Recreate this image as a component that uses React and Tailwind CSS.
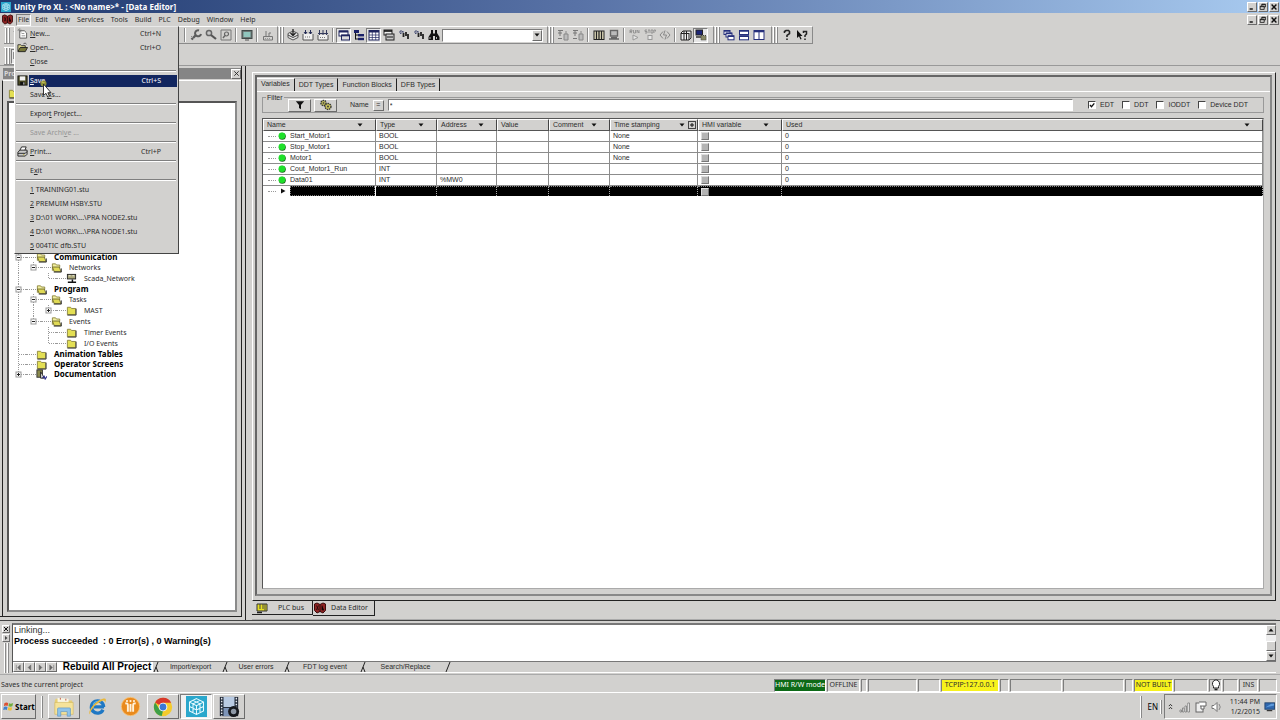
import { useState } from 'react';
import clsx from 'clsx';

const RAISED = 'border border-t-white border-l-white border-r-[#6b6b6b] border-b-[#6b6b6b]';
const SUNKEN = 'border border-t-[#7c7c7c] border-l-[#7c7c7c] border-r-white border-b-white';

const ICONS = {
  wrench: <><path d="M1.500 10.500 L6 6" stroke="#5c5c5c" strokeWidth="2.400" /><path d="M9 1.500 A3 3 0 1 0 11 5" fill="none" stroke="#5c5c5c" strokeWidth="2" /><path d="M1 7 L4 10" stroke="#888" /></>,
  lens: <><circle cx="4" cy="4" r="2.6" fill="#c8c8c8" stroke="#666" strokeWidth="1.5" /><path d="M6 6 L11 10" stroke="#555" strokeWidth="2.2" /></>,
  zoomFit: <><path d="M1 11 V1 H11 V11 Z" fill="none" stroke="#777" /><circle cx="6.5" cy="5" r="2" fill="none" stroke="#666" strokeWidth="1.2" /><path d="M5 6.5 L3 9" stroke="#666" strokeWidth="1.4" /></>,
  screen: <><rect x="1" y="1.5" width="10" height="8" fill="#6d7775" stroke="#3f4a48" /><rect x="2.5" y="3" width="7" height="5" fill="#8fc6bd" /><path d="M4 11 H8" stroke="#555" /></>,
  station: <><path d="M1.5 7.5 H10.5 V11 H1.5 Z M4 7 V2 M7 7 V4 H9" fill="none" stroke="#777" /><path d="M3 9.5 H9" stroke="#999" strokeDasharray="1 1" /></>,
  analyze: <><path d="M1 4.500 L6 2 L11 4.500 V8.500 L6 11 L1 8.500 Z" fill="#e8e8e8" stroke="#555" /><path d="M1 6 L6 8.500 L11 6" fill="none" stroke="#444" /><path d="M6 0 V6 M3.5 4 L6 6.500 L8.5 4" fill="none" stroke="#222" strokeWidth="1.3" /></>,
  build: <><path d="M1 5 V11 H11 V5" fill="#f0f0f0" stroke="#555" /><path d="M3.5 1 V5 M8.5 1 V5 M2 3 L3.5 5 L5 3 M7 3 L8.5 5 L10 3" fill="none" stroke="#222a55" /><path d="M3 8 H9" stroke="#777" strokeDasharray="1 1" /></>,
  buildAll: <><path d="M1 6 V11 H11 V6" fill="#f0f0f0" stroke="#555" /><path d="M2.5 1 V6 M6 1 V6 M9.5 1 V6 M1 4.5 H11" stroke="#333a5c" /><path d="M3 8.5 H9" stroke="#777" strokeDasharray="1 1" /></>,
  windows: <><rect x="1" y="2" width="9" height="5" fill="#fff" stroke="#20265f" /><path d="M1 2.5 H10" stroke="#20265f" strokeWidth="2" /><rect x="3.5" y="6" width="8" height="5" fill="#ddd" stroke="#20265f" /><path d="M3.5 6.5 H11.5" stroke="#20265f" strokeWidth="1.6" /></>,
  tree: <><path d="M2.5 1 V10.5 M2.5 6 H5 M2.5 10 H5" stroke="#111" /><rect x="1" y="1" width="5" height="3" fill="#1a2168" /><rect x="5" y="5" width="6" height="2.4" fill="#1a2168" /><rect x="5" y="8.8" width="6" height="2.4" fill="#1a2168" /></>,
  grid: <><rect x="1" y="1.5" width="10" height="9.5" fill="#fff" stroke="#20265f" /><path d="M1 2.5 H11" stroke="#20265f" strokeWidth="2" /><path d="M1 6 H11 M1 8.5 H11 M4.3 3 V11 M7.7 3 V11" stroke="#20265f" strokeWidth=".7" /></>,
  print: <><rect x="1" y="1" width="8" height="5" fill="#eee" stroke="#222" /><path d="M1 2 H9" stroke="#111" strokeWidth="1.6" /><rect x="3" y="5" width="8" height="6" fill="#c8c8c8" stroke="#222" /><path d="M4 8 H10" stroke="#333" strokeWidth="1.2" /></>,
  findNext: <><path d="M1 3 H6 M3 1 V5 M2 5 L5 2" stroke="#444c74" strokeDasharray="2 1" /><path d="M5.500 4 V8 M8 3 V7 M10 5 V10" stroke="#222" strokeWidth="1.8" /></>,
  binoculars: <><path d="M3 1 H5 V4 L6 5 L7 4 V1 H9 V4 L11.5 8 V11 H7 V7 H5 V11 H.5 V8 L3 4 Z" fill="#111" /><path d="M2 8 V10 M8.5 8 V10" stroke="#ddd" strokeWidth=".8" /></>,
  transfer: <><path d="M1 1.5 H6 M1 4 H5 M3 1 V7 M1 9.5 H5" stroke="#777" /><path d="M7 5 H11 V11 H7 Z M9 5 V2" fill="#bbb" stroke="#888" /></>,
  bars: <><rect x="1" y="2" width="10" height="8.5" fill="#e5e0c0" stroke="#222" /><path d="M3.5 2 V10 M6 2 V10 M8.5 2 V10" stroke="#222" strokeWidth="1.3" /></>,
  pc: <><rect x="2.5" y="1.5" width="7" height="5.5" fill="#bbb" stroke="#666" strokeWidth="1.4" /><path d="M1 10 H11 M3 8.5 H9" stroke="#666" strokeWidth="1.4" /></>,
  run: <><path d="M1 4 V1 H3 V2.5 H1 L3 4 M4.5 1 V4 H6.5 V1 M8 4 V1 L10 4 V1" fill="none" stroke="#888" strokeWidth=".8" /><path d="M4 6 L9 8.5 L4 11 Z" fill="#e6e6e6" stroke="#999" /></>,
  stop: <><path d="M3 1 H1 V2.5 H3 V4 H1 M4 1 H6 M5 1 V4 M7 1 H9 V4 H7 Z M10 4 V1 H11.5 V2.5" fill="none" stroke="#888" strokeWidth=".8" /><rect x="4" y="6.5" width="4" height="4" fill="#e6e6e6" stroke="#999" /></>,
  loop: <path d="M4 2.5 L1 6 L4 9.5 M8 2.5 L11 6 L8 9.5 M6 1.5 L4.5 6 H7.5 L6 10.5" fill="none" stroke="#888" />,
  racks: <><path d="M1 4 L3 2 H11 V9 L9 11 H1 Z" fill="#eee" stroke="#222" /><path d="M1 4.5 H9 M4 2 V11 M6.5 2 V11 M9 4 V11" stroke="#222" /></>,
  network: <><rect x="1" y="1" width="6.5" height="5" fill="#1d2677" stroke="#222" /><path d="M1 8 H8" stroke="#333" strokeWidth="1.5" /><path d="M6 6.500 H11 V11 H6 Z" fill="#8a8a66" stroke="#444" strokeDasharray="1 1" /></>,
  cascade: <><rect x="1" y="1.5" width="6" height="4" fill="#fff" stroke="#26307c" /><rect x="3" y="4" width="6" height="4" fill="#fff" stroke="#26307c" /><rect x="5" y="6.8" width="6" height="4" fill="#fff" stroke="#26307c" /><path d="M1 2 H7 M3 4.5 H9 M5 7.3 H11" stroke="#26307c" strokeWidth="1.4" /></>,
  tileH: <><rect x="1.5" y="1.5" width="9" height="4" fill="#fff" stroke="#26307c" /><rect x="1.5" y="6.8" width="9" height="4" fill="#fff" stroke="#26307c" /><path d="M1.5 2 H10.5 M1.5 7.2 H10.5" stroke="#26307c" strokeWidth="1.5" /></>,
  tileV: <><rect x="1" y="1.5" width="10" height="9" fill="#fff" stroke="#26307c" /><path d="M1 2.3 H11" stroke="#26307c" strokeWidth="2" /><path d="M6 2 V10.5" stroke="#26307c" /></>,
  help: <path d="M3.5 4 V2.5 L5 1.5 H7.5 L8.5 2.5 V4.5 L6 6.5 V8 M6 9.5 V11" fill="none" stroke="#222" strokeWidth="1.6" />,
  whatsThis: <><path d="M1 1 V9 L3 7.3 L4.5 10.5 L5.6 10 L4.2 7 H6.5 Z" fill="#111" /><path d="M7.5 4 V2.5 H10.5 V5 L9 6.5 V8 M9 9.5 V11" fill="none" stroke="#222" strokeWidth="1.5" /></>,
  newFile: <><path d="M3 3 H8 L10.5 5.5 V11 H3 Z" fill="#fff" stroke="#555" /><path d="M5 6 H8 M5 8.5 H9" stroke="#777" strokeWidth=".8" /><path d="M3 0 V5 M.5 2.5 H5.5 M1 1 L5 4.5" stroke="#777" strokeWidth=".7" /></>,
  open: <><path d="M1 10 V3 H4 L5 4 H9 V6" fill="#d8d28a" stroke="#333" /><path d="M1 10.5 L3.5 6 H11.5 L9 10.5 Z" fill="#77763a" stroke="#222" /><path d="M7 2 Q9 0 10.5 2.5" fill="none" stroke="#333" strokeWidth=".8" /></>,
  save: <><rect x="1" y="1" width="10" height="10" fill="#4b4a22" stroke="#111" /><rect x="3" y="1.5" width="6" height="4.5" fill="#f2f2f2" /><rect x="3.5" y="7.5" width="5" height="3.5" fill="#111" /><rect x="7" y="8" width="1" height="2.5" fill="#eee" /></>,
  printer: <><path d="M3 5 L5 1 H10 L8.5 5" fill="#fff" stroke="#222" /><path d="M1 7 L3 4.5 H11 V9 L9 11 H1 Z" fill="#c8c8c8" stroke="#222" /><path d="M1 8 H9 L11 6" fill="none" stroke="#222" /><path d="M6.5 9.5 H8" stroke="#b5a52a" /></>,
  folder: <><path d="M1.5 10.5 V2.5 H5 L6 3.8 H10.5 V10.5 Z" fill="#e3df54" stroke="#8c8640" /><path d="M1.5 11 H11 V4" fill="none" stroke="#333" /></>,
  folderOpen: <><path d="M1.5 9.5 V2 H5 L6 3.3 H9.5 V6" fill="#f2efa0" stroke="#8c8640" /><path d="M3.5 10.5 L1.5 5.5 H9 L11 10.5 Z" fill="#e0da55" stroke="#6e6930" /><path d="M3 11 H11.3 V7" fill="none" stroke="#333" /></>,
  netNode: <><rect x="1.5" y="1.5" width="9" height="5" fill="#a9a678" stroke="#222" /><path d="M3 3 H5 M7 3 H9" stroke="#eee" /><path d="M7 7 V9.5 M2 10 H11" stroke="#111" strokeWidth="1.6" /></>,
  docs: <><rect x="1" y="1" width="6" height="8" fill="#8b8a4d" stroke="#333" /><path d="M5 3 V10 H9 L7 6 Z" fill="#ddd" stroke="#222" /><path d="M7 10 L9 8 L10 11 L12 8" fill="none" stroke="#2a2a8c" strokeWidth="1.2" /></>,
  book: <><path d="M0.5 2 L3 1 L6 2.5 L9 1 L11.5 2 V8.500 L9 11 L6 9.5 L3 11 L.5 8.500 Z" fill="#8e2222" stroke="#3a0c0c" /><path d="M6 2.5 V10 M2.5 3.5 L4.5 8 M4.5 3.5 L2.5 8 M8 3.5 V8 H10" stroke="#1a0a0a" strokeWidth=".8" /></>,
  plcBus: <><path d="M1 2 H11 V9 H1 Z" fill="#e7df20" stroke="#333" /><path d="M4 2 V7 M7 2 V7 M9 2 V9" stroke="#444" /><path d="M1 10.5 H6" stroke="#222" strokeWidth="1.5" /></>,
  cube: <><rect width="12" height="12" fill="#2aa7cc" /><path d="M6 1.5 L10 3.5 V8.5 L6 10.5 L2 8.5 V3.5 Z M2 3.5 L6 5.5 L10 3.5 M6 5.5 V10.5 M4 2.5 L8 4.5 V9.5 M8 2.5 L4 4.5 V9.5 M2 6 L6 8 L10 6" fill="none" stroke="#e9fbff" strokeWidth=".6" /></>,
  funnel: <path d="M1 1.5 H11 L7.2 6 V11 L4.8 9.5 V6 Z" fill="#111" />,
  gears: <><circle cx="3.500" cy="4" r="2.600" fill="#b6b35c" stroke="#333" strokeWidth="1.300" strokeDasharray="1.5 .7" /><circle cx="8" cy="7.500" r="3" fill="#c9c35a" stroke="#333" strokeWidth="1.300" strokeDasharray="1.5 .7" /><circle cx="3.500" cy="4" r=".8" fill="#333" /><circle cx="8" cy="7.500" r=".9" fill="#333" /></>,
  bulb: <><path d="M6 .8 A4 4 0 0 1 8.5 7.5 V9 H3.5 V7.5 A4 4 0 0 1 6 .8 Z" fill="#fff" stroke="#222" /><path d="M4.5 10.5 H7.5" stroke="#222" strokeWidth="1.6" /></>,
  signal: <path d="M1 11 V9 H2.5 V11 Z M3.5 11 V7 H5 V11 Z M6 11 V5 H7.5 V11 Z M8.8 11 V2 H10.5 V11 Z" fill="#fff" stroke="#777" strokeWidth=".8" />,
  plug: <><rect x="1" y="2" width="7" height="9" fill="#eee" stroke="#666" /><path d="M4 1 H11 V5 H5 M6 5 V8 H9 V5" fill="#fff" stroke="#666" /></>,
  speaker: <><path d="M1 4.5 H3 L6 1.5 V10.5 L3 7.5 H1 Z" fill="#fff" stroke="#777" /><path d="M8 3 Q10.5 6 8 9" fill="none" stroke="#888" /></>,
  monitor: <><rect x="1" y="2" width="10.5" height="7" fill="#2f67ae" stroke="#25476e" /><path d="M1.5 7 L8 3 H11 V5 Z" fill="#5d9bdc" /><path d="M3 10.5 H9" stroke="#333" strokeWidth="1.3" /></>,
};

function Icon({ name, className = 'size-3' }) {
  return (
    <svg viewBox="0 0 12 12" className={clsx('block shrink-0', className)} aria-hidden="true">
      {ICONS[name]}
    </svg>
  );
}

function Arrow({ up }) {
  return (
    <svg viewBox="0 0 6 4" className="block h-1 w-[6px] shrink-0" aria-hidden="true">
      <path d={up ? 'M0.5 3.5 L3 .5 L5.5 3.5 Z' : 'M0.5 .5 H5.5 L3 3.5 Z'} fill="#111" />
    </svg>
  );
}

function WindowButtons() {
  const paths = {
    Minimize: 'M2 7.5 H6',
    Restore: 'M3.5 1.5 H8 V5 H6.5 M3.5 2 H8 M3.5 1.5 V4 M1.5 4 H6.5 V8 H1.5 Z M1.5 4.6 H6.5',
    Close: 'M2 2 L8 8 M8 2 L2 8',
  };
  return (
    <div className="flex gap-px">
      {Object.keys(paths).map((label) => (
        <button key={label} type="button" aria-label={label} className={clsx('flex h-[10px] w-[10px] items-center justify-center bg-[#d2d1cf]', RAISED)}>
          <svg viewBox="0 0 10 10" className="block size-2">
            <path d={paths[label]} fill="none" stroke="#111" strokeWidth={label === 'Restore' ? 1 : 1.8} />
          </svg>
        </button>
      ))}
    </div>
  );
}

const MENUS = ['File', 'Edit', 'View', 'Services', 'Tools', 'Build', 'PLC', 'Debug', 'Window', 'Help'];

// [before, accelerator, after, shortcut, icon]
const FILE_MENU = [
  [['', 'N', 'ew...', 'Ctrl+N', 'newFile'], ['', 'O', 'pen...', 'Ctrl+O', 'open'], ['', 'C', 'lose']],
  [['', 'S', 'ave', 'Ctrl+S', 'save'], ['Save ', 'A', 's...']],
  [['Expor', 't', ' Project...']],
  [['Save Archi', 'v', 'e ...']],
  [['', 'P', 'rint...', 'Ctrl+P', 'printer']],
  [['E', 'x', 'it']],
  [
    ['', '1', ' TRAINING01.stu'],
    ['', '2', ' PREMUIM HSBY.STU'],
    ['', '3', ' D:\\01 WORK\\...\\PRA NODE2.stu'],
    ['', '4', ' D:\\01 WORK\\...\\PRA NODE1.stu'],
    ['', '5', ' 004TIC dfb.STU'],
  ],
];

function FileMenu() {
  return (
    <div role="menu" className="absolute top-full left-[-2px] z-20 w-[165px] border border-t-[#e8e8e8] border-l-white border-r-[#444] border-b-[#444] bg-[#d2d1cf] pr-px">
      {FILE_MENU.map((group, i) => (
        <div key={i}>
          {i > 0 && <div className="flex h-[5px] items-center"><div className="mx-px h-[2px] flex-1 border-t border-t-[#7f7f7f] border-b border-b-white" /></div>}
          {group.map(([before, key, after, shortcut, icon]) => {
            const active = icon === 'save';
            const disabled = key === 'v';
            return (
              <button key={key} type="button" role="menuitem" disabled={disabled} className="flex h-[14px] w-full items-center text-left">
                <span className="flex w-[14px] justify-center pl-px">{icon && <Icon name={icon} className="size-[11px]" />}</span>
                <span className={clsx('flex h-3 flex-1 items-center justify-between pl-px pr-4 whitespace-pre', active && 'bg-[#12265f] text-white', disabled && 'text-[#969696]')}>
                  <span>{before}<u>{key}</u>{after}</span>
                  {shortcut && <span>{shortcut}</span>}
                </span>
              </button>
            );
          })}
        </div>
      ))}
    </div>
  );
}

function Cursor() {
  return (
    <svg viewBox="0 0 14 20" className="pointer-events-none absolute top-[78px] left-[38px] z-30 h-5 w-[14px]" aria-hidden="true">
      <circle cx="5.5" cy="5.5" r="3" fill="#b9b52c" opacity=".75" />
      <path d="M5.500 6 V17.500 L8 15.300 L9.800 19.200 L11.500 18.400 L9.800 14.700 H13 Z" fill="#fff" stroke="#222" strokeWidth=".9" />
    </svg>
  );
}

function Grip() {
  return (
    <div className="mx-px flex gap-px self-stretch">
      <div className="w-[2px] border-l border-l-white border-r border-r-[#8a8a8a]" />
      <div className="w-[2px] border-l border-l-white border-r border-r-[#8a8a8a]" />
    </div>
  );
}

function Tools({ items, pressed = [] }) {
  return items.map((name, i) =>
    name === '|' ? (
      <div key={i} className="mx-[2px] h-[14px] w-[2px] border-l border-l-[#8a8a8a] border-r border-r-white" />
    ) : (
      <button key={i} type="button" aria-label={name} className={clsx('flex h-[15px] w-[15px] items-center justify-center', pressed.includes(name) && clsx('bg-[#e6e6e6]', SUNKEN))}>
        <Icon name={name} />
      </button>
    )
  );
}

function Bar({ children, className }) {
  return <div className={clsx('flex h-[18px] items-center border-t border-t-white border-r border-r-[#8a8a8a] border-b border-b-[#8a8a8a]', className)}>{children}</div>;
}

function Toolbars() {
  const [search, setSearch] = useState('');
  return (
    <div className="flex flex-col gap-[3px] pl-1">
      <div className="flex">
        <Bar className="w-[274px] justify-between">
          <div className="flex items-center">
            <Grip />
            <Tools items={['newFile', 'open', 'save', '|', 'print', 'printer']} />
          </div>
          <div className="flex items-center pr-[2px]">
            <Tools items={['|', 'wrench', 'lens', 'zoomFit', '|', 'screen', '|', 'station']} />
          </div>
        </Bar>
        <Bar className="w-[270px]">
          <Grip />
          <Tools items={['analyze', 'build', 'buildAll', '|', 'windows', 'tree', 'grid', 'print', 'findNext', 'findNext', 'binoculars']} pressed={['windows', 'grid']} />
          <div className={clsx('relative mr-1 ml-px flex h-[13px] flex-1 items-center justify-end bg-white', SUNKEN)}>
            <select aria-label="Find" value={search} onChange={(e) => setSearch(e.target.value)} className="h-full w-full appearance-none bg-white">
              <option value=""></option>
            </select>
            <span className={clsx('pointer-events-none absolute right-0 flex h-[11px] w-[10px] items-center justify-center bg-[#d2d1cf]', RAISED)}><Arrow /></span>
          </div>
        </Bar>
        <Bar className="w-[166px]">
          <Grip />
          <Tools items={['transfer', 'transfer', '|', 'bars', 'pc', '|', 'run', 'stop', 'loop', '|', 'racks', 'network']} pressed={['network']} />
        </Bar>
        <Bar className="w-[58px]"><Grip /><Tools items={['cascade', 'tileH', 'tileV']} /></Bar>
        <Bar className="w-[41px]"><Grip /><Tools items={['help', 'whatsThis']} /></Bar>
      </div>
      <Bar className="w-[100px]">
        <Grip />
        <Tools items={['plcBus', 'folder', 'docs']} pressed={['plcBus']} />
      </Bar>
    </div>
  );
}

const TREE = [
  ['minus', 'folderOpen', 'Communication'],
  ['v last-minus', 'folderOpen', 'Networks'],
  ['v blank corner', 'netNode', 'Scada_Network'],
  ['minus', 'folderOpen', 'Program'],
  ['v minus', 'folderOpen', 'Tasks'],
  ['v v last-plus', 'folder', 'MAST'],
  ['v last-minus', 'folderOpen', 'Events'],
  ['v blank tee', 'folder', 'Timer Events'],
  ['v blank corner', 'folder', 'I/O Events'],
  ['tee', 'folder', 'Animation Tables'],
  ['tee', 'folder', 'Operator Screens'],
  ['last-plus', 'docs', 'Documentation'],
];

function Guide({ kind }) {
  const box = kind.includes('minus') || kind.includes('plus');
  const last = kind.startsWith('last') || kind === 'corner';
  return (
    <svg viewBox="0 0 15 11" className="block h-[11px] w-[15px] shrink-0" aria-hidden="true">
      {kind !== 'blank' && <path d={last ? 'M7.5 0 V5.5' : 'M7.5 0 V11'} stroke="#999" strokeDasharray="1 1" />}
      {kind !== 'blank' && kind !== 'v' && <path d="M8 5.5 H15" stroke="#999" strokeDasharray="1 1" />}
      {box && <rect x="5" y="3" width="5" height="5" fill="#fff" stroke="#999" />}
      {box && <path d={kind.includes('plus') ? 'M6 5.500 H9 M7.500 4 V7' : 'M6 5.500 H9'} stroke="#222" />}
    </svg>
  );
}

function ProjectBrowser() {
  return (
    <section className="mb-[3px] flex w-[242px] flex-col border-r border-r-[#222] border-b border-b-[#222] pt-[2px]">
      <header className="ml-[3px] flex h-[11px] items-center justify-between bg-[#858585] pl-px font-bold text-[#d8d8d8]">
        <span>Project Browser</span>
        <button type="button" aria-label="Close project browser" className={clsx('flex h-[10px] w-[10px] items-center justify-center bg-[#d2d1cf]', RAISED)}>
          <svg viewBox="0 0 8 8" className="block size-[7px]"><path d="M1.500 1.500 L6.500 6.500 M6.500 1.500 L1.500 6.500" stroke="#222" /></svg>
        </button>
      </header>
      <div className="mt-px ml-[2px] flex flex-1 flex-col border-t border-l border-t-white border-l-[#222] p-1">
        <div className="flex h-4 items-center pl-px">
          <Icon name="folder" className="size-[11px]" />
        </div>
        <div className="flex flex-1 flex-col border-2 border-t-[#555] border-l-[#555] border-r-[#8a8a8a] border-b-[#8a8a8a] bg-white">
          <ul className="pt-[149px] pl-[2px]">
            {TREE.map(([guides, icon, label]) => {
              const cells = guides.split(' ');
              const root = cells.length === 1;
              return (
                <li key={label} className={clsx('flex items-center', root ? 'h-[10px] text-[8px] font-bold text-black' : 'h-[11px]')}>
                  {cells.map((kind, i) => <Guide key={i} kind={kind} />)}
                  <span className="w-[10px] border-t border-dotted border-t-[#999]" />
                  <Icon name={icon} className="size-[11px]" />
                  <span className="pl-[7px]">{label}</span>
                </li>
              );
            })}
          </ul>
        </div>
      </div>
    </section>
  );
}

const COLUMNS = [
  ['Name', 'w-[113px]', true],
  ['Type', 'w-[61px]', true],
  ['Address', 'w-[60px]', true],
  ['Value', 'w-[52px]', false],
  ['Comment', 'w-[61px]', true],
  ['Time stamping', 'w-[88px]', true],
  ['HMI variable', 'w-[84px]', true],
  ['Used', 'w-auto', true],
];

const VARIABLES = [
  { name: 'Start_Motor1', type: 'BOOL', address: '', stamp: 'None' },
  { name: 'Stop_Motor1', type: 'BOOL', address: '', stamp: 'None' },
  { name: 'Motor1', type: 'BOOL', address: '', stamp: 'None' },
  { name: 'Cout_Motor1_Run', type: 'INT', address: '', stamp: '' },
  { name: 'Data01', type: 'INT', address: '%MW0', stamp: '' },
];

const CELL = 'h-[11px] border-r border-b border-[#8c8c8c] p-0 pl-[3px]';

function HmiBox() {
  return <input type="checkbox" aria-label="HMI variable" className="block size-[8px] appearance-none border border-t-[#ddd] border-l-[#ddd] border-r-[#777] border-b-[#777] bg-[#b4b4b4]" />;
}

function VariableTable() {
  return (
    <div className="flex-1 border border-t-[#555] border-l-[#555] border-r-[#aaa] border-b-[#aaa] bg-white">
      <table className="w-full table-fixed border-separate border-spacing-0">
        <thead>
          <tr>
            {COLUMNS.map(([label, width, arrow]) => (
              <th key={label} className={clsx('h-3 border border-t-white border-l-white border-r-[#444] border-b-[#555] bg-[#d2d1cf] p-0 pl-[3px] text-left font-normal', width)}>
                <span className="flex items-center justify-between">
                  {label}
                  {arrow && (
                    <span className={clsx('flex items-center gap-[3px]', label === 'Time stamping' ? 'pr-px' : 'pr-3')}>
                      <Arrow />
                      {label === 'Time stamping' && (
                        <button type="button" aria-label="Expand time stamping" className="flex size-2 items-center justify-center border border-[#444]">
                          <svg viewBox="0 0 6 6" className="block size-[6px]"><path d="M1 3 H5 M3 1 V5" stroke="#111" /></svg>
                        </button>
                      )}
                    </span>
                  )}
                </span>
              </th>
            ))}
          </tr>
        </thead>
        <tbody>
          {VARIABLES.map((v) => (
            <tr key={v.name}>
              <td className={CELL}>
                <span className="flex items-center pl-[2px]">
                  <span className="w-2 border-t border-dotted border-t-[#999]" />
                  <svg viewBox="0 0 8 8" className="mx-[3px] ml-[2px] block size-2"><circle cx="4.300" cy="4.300" r="3.500" fill="#17641a" /><circle cx="3.900" cy="3.800" r="3.300" fill="#1ee02a" /></svg>
                  <span className="pl-px">{v.name}</span>
                </span>
              </td>
              <td className={CELL}>{v.type}</td>
              <td className={CELL}>{v.address}</td>
              <td className={CELL}></td>
              <td className={CELL}></td>
              <td className={CELL}>{v.stamp}</td>
              <td className={CELL}><HmiBox /></td>
              <td className={CELL}>0</td>
            </tr>
          ))}
          <tr className="bg-black">
            <td className="h-[10px] border-r border-r-white bg-white p-0">
              <span className="flex items-center pl-[5px]">
                <span className="w-2 border-t border-dotted border-t-[#999]" />
                <svg viewBox="0 0 6 6" className="mx-[4px] block size-[6px]"><path d="M1 .5 L5.500 3 L1 5.500 Z" fill="#111" /></svg>
                <input aria-label="New variable" className="h-[10px] w-0 flex-1 border border-dotted border-[#777] bg-black text-white" />
              </span>
            </td>
            {COLUMNS.slice(1).map(([label]) => (
              <td key={label} className="h-[10px] border-t border-r border-dotted border-t-[#888] border-r-[#aaa] p-0 pl-[3px]">
                {label === 'HMI variable' && <HmiBox />}
              </td>
            ))}
          </tr>
        </tbody>
      </table>
    </div>
  );
}

function FilterBar() {
  const [filter, setFilter] = useState('*');
  const [types, setTypes] = useState({ EDT: true, DDT: false, IODDT: false, 'Device DDT': false });
  return (
    <fieldset className="mb-[5px] h-[16px] min-w-0 border border-[#999] px-[3px]">
      <legend className="flex h-px items-center"><span className="bg-[#d2d1cf] px-px leading-[8px]">Filter</span></legend>
      <div className="flex h-[14px] items-center">
        <button type="button" aria-label="Filter" className={clsx('ml-[22px] flex h-[13px] w-[23px] items-center justify-center', RAISED)}><Icon name="funnel" className="size-[10px]" /></button>
        <button type="button" aria-label="Filter options" className={clsx('ml-[3px] flex h-[13px] w-[23px] items-center justify-center', RAISED)}><Icon name="gears" /></button>
        <label htmlFor="name-filter" className="ml-[13px]">Name</label>
        <button type="button" aria-label="Operator" className={clsx('mx-1 flex h-[11px] w-[11px] items-center justify-center', RAISED)}>=</button>
        <input id="name-filter" value={filter} onChange={(e) => setFilter(e.target.value)} className={clsx('h-3 min-w-0 flex-1 bg-white pl-px', SUNKEN)} />
        <div className="flex items-center gap-2 pr-[12px] pl-[15px]">
          {Object.keys(types).map((t) => (
            <label key={t} className="flex items-center gap-1">
              <span className="relative block size-2">
                <input type="checkbox" checked={types[t]} onChange={() => setTypes({ ...types, [t]: !types[t] })} className="block size-2 appearance-none border border-t-[#444] border-l-[#444] border-r-white border-b-white bg-white" />
                {types[t] && <svg viewBox="0 0 8 8" className="pointer-events-none absolute inset-0 size-2"><path d="M2 4 L3.500 5.700 L6.300 2.300" fill="none" stroke="#111" strokeWidth="1.300" /></svg>}
              </span>
              {t}
            </label>
          ))}
        </div>
      </div>
    </fieldset>
  );
}

function DataEditor() {
  const [tab, setTab] = useState('Variables');
  return (
    <section className="flex min-w-0 flex-1 flex-col border-l border-l-[#222] pt-[6px] pr-1 pl-[6px] font-['Liberation_Sans',Arial,sans-serif]">
      <div className="flex flex-1 flex-col border border-t-white border-l-white border-r-[#222] border-b-[#222] pt-[2px] pr-[3px] pb-1 pl-[2px]">
        <div className="flex flex-1 flex-col border-2 border-t-[#666] border-l-[#666] border-r-[#888] border-b-[#888]">
          <div role="tablist" className="flex h-[14px] items-end">
            {['Variables', 'DDT Types', 'Function Blocks', 'DFB Types'].map((t) => (
              <button
                key={t}
                type="button"
                role="tab"
                aria-selected={tab === t}
                onClick={() => setTab(t)}
                className={clsx('h-[13px] border-r border-r-[#222] px-1 whitespace-nowrap', tab === t ? 'border-t border-t-white pb-[2px]' : 'border-t border-t-[#bbb]')}
              >
                {t}
              </button>
            ))}
          </div>
          <div className="flex flex-1 flex-col border-t border-t-white pt-[5px] pr-[6px] pb-[5px] pl-[5px]">
            <FilterBar />
            <VariableTable />
          </div>
        </div>
      </div>
      <div className="flex h-[19px] items-start border-b border-b-[#aaa] font-['Noto_Sans',sans-serif]">
        <button type="button" className="flex h-[14px] w-[61px] items-center justify-between border-r border-b border-[#222] pr-2 pl-[4px]"><Icon name="plcBus" /> PLC bus</button>
        <button type="button" className="flex h-[15px] w-[62px] items-center justify-between border-r border-b border-[#222] pr-[6px] pl-px"><Icon name="book" /> Data Editor</button>
      </div>
    </section>
  );
}

function Slash({ both = true }) {
  return (
    <svg viewBox="0 0 6 10" className="block h-[10px] w-[6px] shrink-0" aria-hidden="true">
      <path d={both ? 'M1 10 L5 0 M3 5 L5 10' : 'M1 10 L5 0'} stroke="#222" fill="none" />
    </svg>
  );
}

const NAV_PATHS = ['M1.5 1 V7 M6 1 L3 4 L6 7 Z', 'M5.500 1 L2.500 4 L5.500 7 Z', 'M2.500 1 L5.500 4 L2.500 7 Z', 'M6.500 1 V7 M2 1 L5 4 L2 7 Z'];

function OutputPanel() {
  const tabs = [['Import/export', 'w-[63px]'], ['User errors', 'w-[56px]'], ['FDT log event', 'w-[70px]'], ['Search/Replace', 'w-[79px]']];
  return (
    <section className="flex h-[54px] border-t border-t-[#444] pt-[2px] pr-1 pb-px">
      <div className="flex w-3 flex-col items-center gap-px pt-[2px]">
        <button type="button" aria-label="Close output" className={clsx('flex size-2 items-center justify-center', RAISED)}>
          <svg viewBox="0 0 6 6" className="block size-[6px]"><path d="M1 1 L5 5 M5 1 L1 5" stroke="#111" /></svg>
        </button>
        <button type="button" aria-label="Dock output" className={clsx('flex size-2 items-center justify-center', RAISED)}>
          <svg viewBox="0 0 6 6" className="block size-[6px]"><path d="M2 1 L4.500 3 L2 5 Z" fill="#444" /></svg>
        </button>
        <div className="flex flex-1"><Grip /></div>
      </div>
      <div className="flex min-w-0 flex-1 flex-col border-t-2 border-b border-l border-t-[#777] border-b-white border-l-[#555]">
        <div className="flex flex-1 bg-white">
          <div className="flex-1 pl-px font-['Liberation_Sans',Arial,sans-serif] text-[9px] leading-[11px] text-[#333]">
            <p>Linking...</p>
            <p className="font-bold whitespace-pre text-black">{'Process succeeded  : 0 Error(s) , 0 Warning(s)'}</p>
          </div>
          <div className="flex w-[10px] flex-col bg-[#eee]">
            <button type="button" aria-label="Scroll up" className={clsx('flex h-[10px] items-center justify-center bg-[#d2d1cf]', RAISED)}><Arrow up /></button>
            <div className="flex-1" />
            <div className={clsx('h-[10px] bg-[#d2d1cf]', RAISED)} />
            <button type="button" aria-label="Scroll down" className={clsx('flex h-[10px] items-center justify-center bg-[#d2d1cf]', RAISED)}><Arrow /></button>
          </div>
        </div>
        <div className="flex h-[11px] items-center border-t border-t-[#777] font-['Liberation_Sans',Arial,sans-serif]">
          {NAV_PATHS.map((d, i) => (
            <button key={d} type="button" aria-label={'Scroll tabs ' + (i + 1)} className={clsx('flex h-[10px] w-[11px] items-center justify-center', RAISED)}>
              <svg viewBox="0 0 8 8" className="block size-[7px]"><path d={d} fill="#666" stroke="#666" strokeWidth=".6" /></svg>
            </button>
          ))}
          <button type="button" className="flex h-[10px] w-[96px] items-center justify-center bg-white pl-[4px] text-[10px] font-bold whitespace-nowrap text-black">Rebuild All Project</button>
          <Slash />
          {tabs.map(([t, width], i) => (
            <div key={t} className="flex items-center">
              <button type="button" className={clsx('h-[10px] whitespace-nowrap leading-[10px]', width)}>{t}</button>
              <Slash both={i < 3} />
            </div>
          ))}
        </div>
      </div>
    </section>
  );
}

const STATUS = [
  ['HMI R/W mode', 'w-[52px] bg-[#0d6a17] text-white'],
  ['OFFLINE', 'w-[33px]'],
  ['', 'w-[6px]'],
  ['', 'w-[49px]'],
  ['', 'w-[22px]'],
  ['TCPIP:127.0.0.1', 'w-[58px] bg-[#f7f21c]'],
  ['', 'w-[9px]'],
  ['', 'w-[52px]'],
  ['', 'w-[61px]'],
  ['', 'w-[8px]'],
  ['NOT BUILT', 'w-[39px] bg-[#f7f21c]'],
  ['', 'w-[34px]'],
  ['bulb', 'w-[13px]'],
  ['', 'w-[15px]'],
  ['INS', 'w-[19px]'],
  ['', 'w-[18px]'],
];

function StatusBar() {
  return (
    <footer className="flex h-[18px] items-center justify-between border-t border-t-[#aaa] pt-[3px] pr-[3px]">
      <span className="pl-px">Saves the current project</span>
      <div className="flex gap-px">
        {STATUS.map(([text, look], i) => (
          <div key={i} className={clsx('flex h-[13px] items-center justify-center whitespace-nowrap', SUNKEN, look)}>
            {text === 'bulb' ? <Icon name="bulb" /> : text}
          </div>
        ))}
      </div>
    </footer>
  );
}

function AppIcon({ name }) {
  if (name === 'explorer') {
    return (
      <svg viewBox="0 0 24 24" className="block size-[22px]">
        <path d="M2 5 L3 3 H9 L10 5 H21 V19 H2 Z" fill="#e8cf76" />
        <path d="M5 2 L17 3 V8 H5 Z" fill="#f8f6e4" />
        <path d="M8 2 V4 M14 3 V5" stroke="#c0503c" />
        <path d="M2 7 H22 V20 H2 Z" fill="#f5e39a" stroke="#cdb155" strokeWidth=".6" />
        <path d="M5 22 V14 Q5 13 6 13 H18 Q19 13 19 14 V22 H15.500 V17 H8.500 V22 Z" fill="#8fc4ea" stroke="#5a93c4" strokeWidth=".7" />
      </svg>
    );
  }
  if (name === 'ie') {
    return (
      <svg viewBox="0 0 24 24" className="block size-[21px]">
        <path d="M19.500 12.500 H7.500 M18.300 15.700 A7 7 0 1 1 19 12.500" fill="none" stroke="#1f78c4" strokeWidth="3.800" />
        <path d="M7 10 A6 6 0 0 1 16 7" fill="none" stroke="#5cb4ea" strokeWidth="1.200" />
        <path d="M3.500 21 C0 17 10 5 18 3 C22 2 22.500 4 20.500 8 C21 4.500 19 4.500 15 6.500 C8 10.500 3 18 3.500 21 Z" fill="#e9b83a" />
      </svg>
    );
  }
  if (name === 'orange') {
    return (
      <svg viewBox="0 0 24 24" className="block size-[21px]">
        <circle cx="12" cy="12" r="10.500" fill="#e98a1d" stroke="#f5c27a" />
        <path d="M6 8.500 Q9 8 9 10.500 V18 M12 9 V18 M18 8.500 Q15 8 15 10.500 V18" fill="none" stroke="#fff1da" strokeWidth="2.200" />
        <circle cx="8" cy="5.800" r="1.200" fill="#fff1da" /><circle cx="12" cy="5.800" r="1.200" fill="#fff1da" /><circle cx="16" cy="5.800" r="1.200" fill="#fff1da" />
      </svg>
    );
  }
  if (name === 'chrome') {
    return (
      <svg viewBox="0 0 24 24" className="block size-[20px]">
        <circle cx="12" cy="12" r="11" fill="#f4cb2d" />
        <path d="M12 12 L2.500 6.500 A11 11 0 0 1 21.800 7 H12 Z" fill="#d8392c" />
        <path d="M2.500 6.500 L8 15 L12 16.500 L10.500 22.900 A11 11 0 0 1 2.500 6.500 Z" fill="#3e9f47" />
        <circle cx="12" cy="12" r="5.200" fill="#fff" />
        <circle cx="12" cy="12" r="4.100" fill="#3b78d4" />
      </svg>
    );
  }
  if (name === 'recorder') {
    return (
      <svg viewBox="0 0 24 24" className="block size-[22px]">
        <rect x="2" y="1" width="20" height="21" fill="#1f2735" />
        <rect x="6" y="1" width="12" height="11" fill="#b9cbe3" />
        <rect x="6" y="13" width="12" height="9" fill="#7d94b8" />
        <path d="M4 2 V22 M20 2 V22" stroke="#e6ebf2" strokeWidth="1.600" strokeDasharray="1.700 1.500" />
        <circle cx="17" cy="17" r="6" fill="#16181d" /><circle cx="17" cy="17" r="3" fill="#8e98a6" />
      </svg>
    );
  }
  return <Icon name="cube" className="size-[21px]" />;
}

function Taskbar() {
  const apps = [['explorer', true], ['ie', false], ['orange', false], ['chrome', true], ['unity', true], ['recorder', true]];
  return (
    <footer className="flex h-7 items-center justify-between border-t border-t-white pr-[3px] pl-px">
      <div className="flex items-center">
        <button type="button" className={clsx('flex h-[25px] w-[35px] items-center gap-px pl-px text-[8px] font-bold text-black', RAISED)}>
          <svg viewBox="0 0 12 12" className="block size-[11px] shrink-0">
            <path d="M1.500 2.500 Q3.500 1 5.700 2.300 L5 5.500 Q3 4.400 1 5.700 Z" fill="#dc5030" />
            <path d="M6.500 2.500 Q8.500 3.600 11 2.300 L10.200 5.800 Q8 6.700 5.900 5.700 Z" fill="#6fae3c" />
            <path d="M.9 6.500 Q3 5.400 4.900 6.500 L4.200 9.700 Q2.200 8.600 .2 9.900 Z" fill="#3f7fcd" />
            <path d="M5.700 6.700 Q7.700 7.700 10 6.700 L9.300 10 Q7 10.900 5 9.900 Z" fill="#efc03a" />
          </svg>
          Start
        </button>
        <div className="mx-[5px] h-[22px] w-[2px] border-l border-l-white border-r border-r-[#888]" />
        <div className="flex gap-px">
          {apps.map(([name, open]) => (
            <button key={name} type="button" aria-label={name} className={clsx('flex h-[25px] w-8 items-center justify-center', open && (name === 'unity' ? clsx('bg-[#f1f1f1]', SUNKEN) : RAISED))}>
              <AppIcon name={name} />
            </button>
          ))}
        </div>
      </div>
      <div className="flex items-center">
        <div className="mr-[5px] h-[22px] w-[2px] border-l border-l-white border-r border-r-[#888]" />
        <span className="text-[8px] text-black">EN</span>
        <div className="mx-[2px] h-[14px] w-[2px] border-l border-l-white border-r border-r-[#888]" />
        <div className={clsx('flex h-[25px] w-[113px] items-center pr-px pl-[3px]', SUNKEN)}>
          <svg viewBox="0 0 6 8" className="block h-[7px] w-[5px]"><path d="M1 3.500 L3 1.500 L5 3.500 M1 7 L3 5 L5 7" fill="none" stroke="#111" /></svg>
          <div className="flex gap-1 pl-[6px]">
            <Icon name="signal" />
            <Icon name="plug" />
            <Icon name="speaker" />
          </div>
          <div className="flex-1 pr-1 text-right leading-[10px]">
            <div>11:44 PM</div>
            <div>1/2/2015</div>
          </div>
          <Icon name="monitor" className="size-[11px]" />
        </div>
      </div>
    </footer>
  );
}

function App() {
  return (
    <div className="relative flex min-h-screen w-full flex-col bg-[#d2d1cf] font-['Noto_Sans',sans-serif] text-[7px] leading-[10px] text-[#2c2c2c]">
      <header className="flex h-[13px] items-center justify-between bg-linear-to-r from-[#20396f] via-[#5872a6] via-45% to-[#a9cbf0] pr-px pl-px">
        <div className="flex items-center gap-[3px]">
          <Icon name="cube" className="size-[10px]" />
          <h1 className="text-[8px] font-bold text-white">Unity Pro XL : &lt;No name&gt;* - [Data Editor]</h1>
        </div>
        <WindowButtons />
      </header>
      <nav className="flex h-[13px] items-center justify-between pr-px pl-[2px]">
        <div className="flex items-center">
          <Icon name="book" className="size-[11px]" />
          {MENUS.map((m) =>
            m === 'File' ? (
              <div key={m} className="relative ml-[3px]">
                <button type="button" aria-expanded="true" className={clsx('block h-3 px-px', SUNKEN)}>{m}</button>
                <FileMenu />
              </div>
            ) : (
              <button key={m} type="button" className="pr-[3px] pl-1">{m}</button>
            )
          )}
        </div>
        <WindowButtons />
      </nav>
      <Toolbars />
      <main className="flex flex-1 gap-[3px] border-t border-t-[#999]">
        <ProjectBrowser />
        <DataEditor />
      </main>
      <OutputPanel />
      <StatusBar />
      <Taskbar />
      <Cursor />
    </div>
  );
}

export default App;
